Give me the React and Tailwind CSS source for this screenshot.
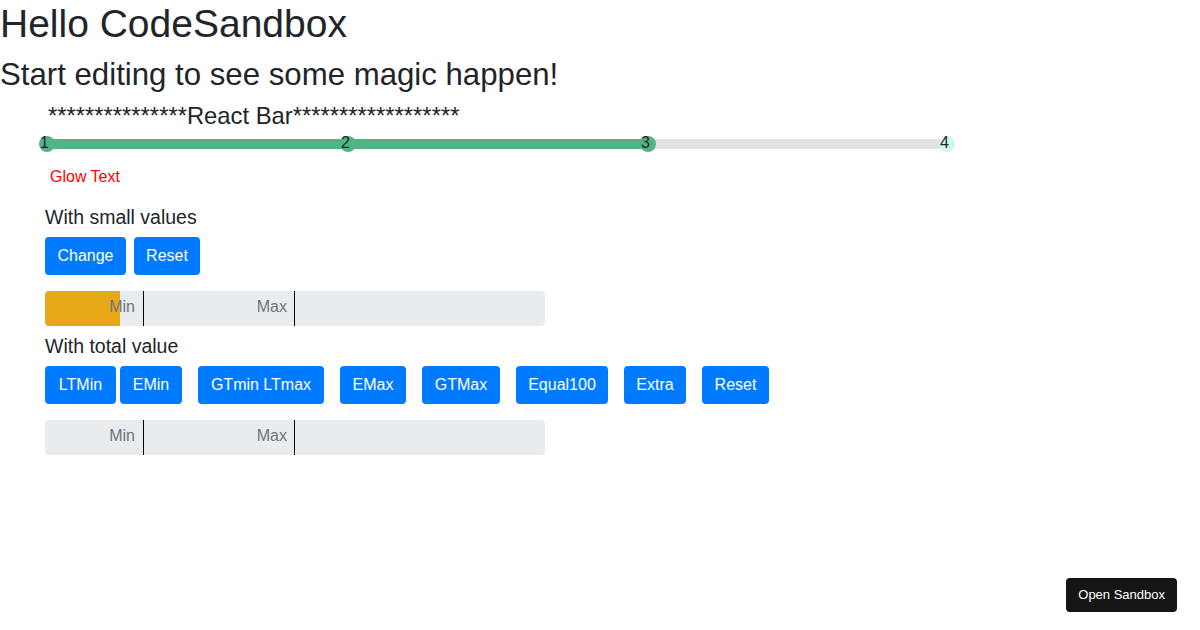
import React from 'react';

const steps = [
  { label: '1', left: 0, done: true },
  { label: '2', left: 301, done: true },
  { label: '3', left: 601, done: true },
  { label: '4', left: 900, done: false },
];

function Meter({ fill }) {
  return (
    <div className="relative ml-[45px] w-[500px] h-[35px] bg-[#e9ecef] rounded overflow-hidden">
      {fill ? <div className="absolute left-0 top-0 h-full bg-[#e6a817]" style={{ width: fill }} /> : null}
      <div className="absolute left-0 top-0 h-full w-[99px] border-r border-black flex items-center justify-end pr-[8px] pb-[3px] text-[16px] text-[#6c757d]">
        Min
      </div>
      <div className="absolute left-[99px] top-0 h-full w-[151px] border-r border-black flex items-center justify-end pr-[7px] pb-[3px] text-[16px] text-[#6c757d]">
        Max
      </div>
    </div>
  );
}

function Btn({ children, className = '' }) {
  return (
    <button className={`h-[38px] bg-[#007bff] text-white text-[16px] leading-6 rounded ${className}`}>
      {children}
    </button>
  );
}

export default function App() {
  return (
    <div className="min-h-[630px] bg-white text-[#212529] font-['Liberation_Sans',Arial,sans-serif]">
      <h1 className="text-[39px] leading-[48px] mb-2">Hello CodeSandbox</h1>
      <h2 className="text-[31.2px] leading-[38.4px] mb-2">Start editing to see some magic happen!</h2>

      <div className="pl-[48px] text-[23.8px] leading-[28.8px]">
        ***************React Bar******************
      </div>

      <div className="relative ml-[47px] w-[900px] h-4 mt-[5px] py-[3px]">
        <div className="h-[10px] w-full rounded-full bg-[#e3e3e3] overflow-hidden">
          <div className="h-full w-[601px] rounded-full bg-[#52b484]" />
        </div>
        {steps.map((s) => (
          <div key={s.label} className="absolute top-0" style={{ left: s.left - 8 }}>
            <div className={`w-4 h-4 rounded-full ${s.done ? 'bg-[#52b484]' : 'bg-[#d3f8ec]'}`} />
            <span className="absolute left-[1px] top-[-1px] text-[16px] leading-4 text-[#212529]">{s.label}</span>
          </div>
        ))}
      </div>

      <div className="ml-[50px] mt-[13px] text-[16px] leading-6 text-[#ff0000]">Glow Text</div>

      <div className="ml-[45px] mt-[16px] text-[19.5px] leading-6">With small values</div>
      <div className="ml-[45px] mt-[8px] flex gap-2">
        <Btn className="w-[81px]">Change</Btn>
        <Btn className="w-[66px]">Reset</Btn>
      </div>
      <div className="mt-4">
        <Meter fill={75} />
      </div>

      <div className="ml-[45px] mt-[8px] text-[19.5px] leading-6">With total value</div>
      <div className="ml-[45px] mt-[8px] flex">
        <Btn className="w-[71px]">LTMin</Btn>
        <Btn className="ml-1 w-[62px]">EMin</Btn>
        <Btn className="ml-4 w-[126px]">GTmin LTmax</Btn>
        <Btn className="ml-4 w-[66px]">EMax</Btn>
        <Btn className="ml-4 w-[78px]">GTMax</Btn>
        <Btn className="ml-4 w-[92px]">Equal100</Btn>
        <Btn className="ml-4 w-[62px]">Extra</Btn>
        <Btn className="ml-4 w-[67px]">Reset</Btn>
      </div>
      <div className="mt-4">
        <Meter />
      </div>

      <button className="fixed right-[23px] bottom-[18px] h-[34px] px-[12px] bg-[#151515] text-white text-[13px] rounded">
        Open Sandbox
      </button>
    </div>
  );
}
